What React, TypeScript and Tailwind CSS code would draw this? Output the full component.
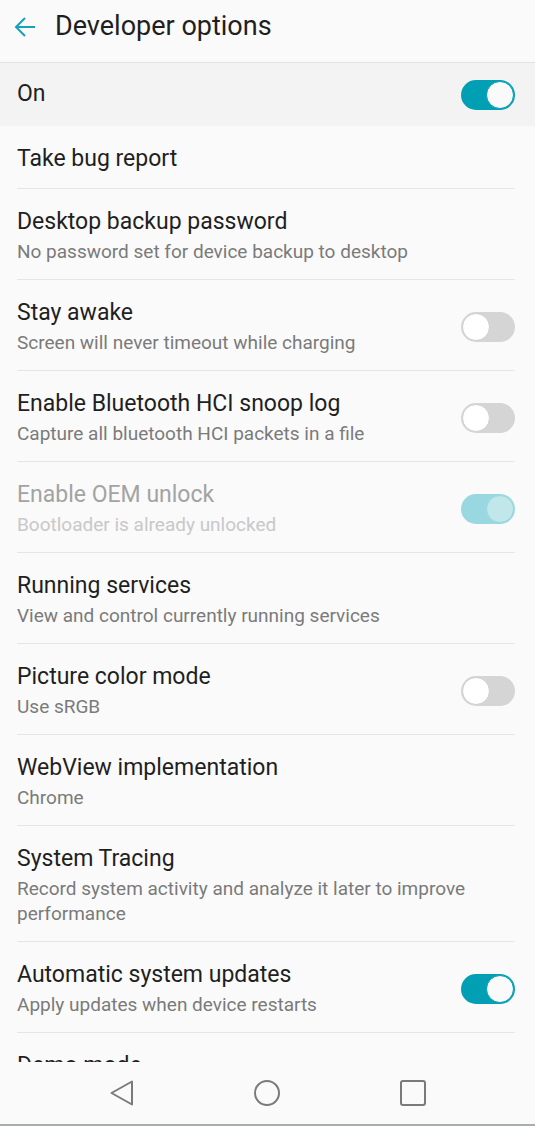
import React from 'react';

type Item = {
  title: string;
  summary?: string;
  toggle?: 'on' | 'off' | 'disabled';
  disabled?: boolean;
};

const items: Item[] = [
  { title: 'Take bug report' },
  { title: 'Desktop backup password', summary: 'No password set for device backup to desktop' },
  { title: 'Stay awake', summary: 'Screen will never timeout while charging', toggle: 'off' },
  { title: 'Enable Bluetooth HCI snoop log', summary: 'Capture all bluetooth HCI packets in a file', toggle: 'off' },
  { title: 'Enable OEM unlock', summary: 'Bootloader is already unlocked', toggle: 'disabled', disabled: true },
  { title: 'Running services', summary: 'View and control currently running services' },
  { title: 'Picture color mode', summary: 'Use sRGB', toggle: 'off' },
  { title: 'WebView implementation', summary: 'Chrome' },
  { title: 'System Tracing', summary: 'Record system activity and analyze it later to improve performance' },
  { title: 'Automatic system updates', summary: 'Apply updates when device restarts', toggle: 'on' },
  { title: 'Demo mode', summary: 'System UI demo mode' },
];

function Toggle({ state }: { state: 'on' | 'off' | 'disabled' }) {
  if (state === 'off') {
    return (
      <div className="relative w-[54px] h-[30px] rounded-full bg-[#d5d5d5] shrink-0">
        <div className="absolute left-[1px] top-[1px] w-[28px] h-[28px] rounded-full bg-white border border-[#cfcfcf]" />
      </div>
    );
  }
  const on = state === 'on';
  return (
    <div className={`relative w-[54px] h-[30px] rounded-full shrink-0 ${on ? 'bg-[#009fb3]' : 'bg-[#99d8e0]'}`}>
      <div
        className={`absolute right-[1px] top-[1px] w-[28px] h-[28px] rounded-full border ${
          on ? 'bg-[#fafafa] border-[#009fb3]' : 'bg-[#c2e7eb] border-[#99d8e0]'
        }`}
      />
    </div>
  );
}

function Row({ item }: { item: Item }) {
  const pb = item.summary ? 'pb-[15px]' : 'pb-[14px]';
  return (
    <div className="pl-[17px] pr-[20px]">
      <div className={`flex items-center justify-between gap-4 pt-[18px] ${pb} border-b border-[#e6e6e6]`}>
        <div className="flex flex-col">
          <div className={`text-[23px] leading-[30px] ${item.disabled ? 'text-[#a3a3a3]' : 'text-[#1f1f1f]'}`}>
            {item.title}
          </div>
          {item.summary && (
            <div className={`text-[19px] leading-[25px] mt-[2px] ${item.disabled ? 'text-[#c8c8c8]' : 'text-[#7a7a7a]'}`}>
              {item.summary}
            </div>
          )}
        </div>
        {item.toggle && <Toggle state={item.toggle} />}
      </div>
    </div>
  );
}

export default function App() {
  return (
    <div
      className="w-[535px] h-[1126px] bg-[#fafafa] flex flex-col overflow-hidden"
      style={{ fontFamily: 'Roboto, "Noto Sans", sans-serif' }}
    >
      <header className="h-[63px] shrink-0 flex items-center border-b border-[#e2e2e2]">
        <svg className="ml-[13px] w-[24px] h-[24px] -mt-[8px]" viewBox="0 0 24 24" fill="none" stroke="#17a2b8" strokeWidth="2">
          <path d="M22 12H3M12 3l-9 9 9 9" />
        </svg>
        <h1 className="ml-[18px] text-[27px] text-[#1f1f1f] -mt-[9px]">Developer options</h1>
      </header>

      <div className="h-[63px] shrink-0 bg-[#f3f3f3] flex items-center justify-between pl-[17px] pr-[20px]">
        <span className="text-[23px] text-[#1f1f1f]">On</span>
        <Toggle state="on" />
      </div>

      <div className="flex-1 overflow-hidden">
        {items.map((item) => (
          <Row key={item.title} item={item} />
        ))}
      </div>

      <nav className="h-[64px] shrink-0 bg-[#fafafa] flex items-center justify-center gap-[118px] relative border-b-2 border-[#a8adb0]">
        <svg width="26" height="28" viewBox="0 0 26 28" fill="none" stroke="#7a7a7a" strokeWidth="2" strokeLinejoin="round">
          <path d="M23 2.5v23L2.5 14z" />
        </svg>
        <svg width="28" height="28" viewBox="0 0 28 28" fill="none" stroke="#7a7a7a" strokeWidth="2">
          <circle cx="14" cy="14" r="12" />
        </svg>
        <svg width="28" height="28" viewBox="0 0 28 28" fill="none" stroke="#7a7a7a" strokeWidth="2">
          <rect x="2" y="2" width="24" height="24" rx="2" />
        </svg>
      </nav>
    </div>
  );
}
